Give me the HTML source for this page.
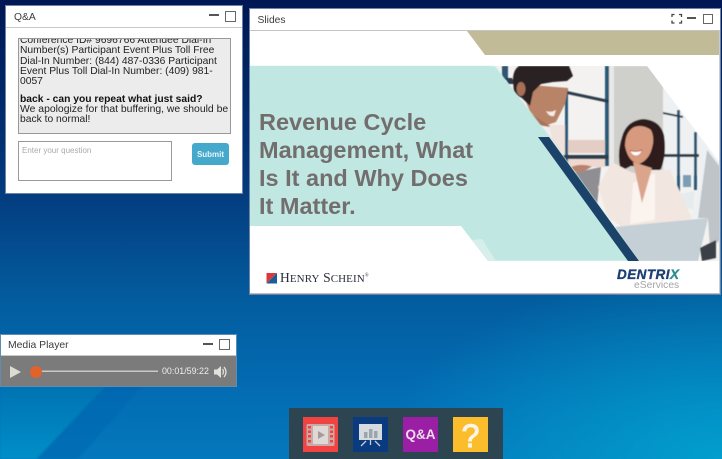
<!DOCTYPE html>
<html>
<head>
<meta charset="utf-8">
<style>
html,body{margin:0;padding:0;width:722px;height:459px;overflow:hidden;font-family:"Liberation Sans",sans-serif}
body{position:relative;background:radial-gradient(ellipse 340px 190px at 100% 100%,rgba(2,165,208,.85) 0%,rgba(2,165,208,0) 100%),linear-gradient(180deg,#001754 0%,#00205f 12%,#03397c 40%,#035c9e 65%,#036cb3 85%,#0478bc 100%)}
.abs{position:absolute}
.win{position:absolute;background:#fff;box-sizing:border-box;filter:blur(.35px)}
.t{position:absolute;white-space:nowrap}
.min{position:absolute;height:2px;width:10px;background:#555}
.max{position:absolute;width:9px;height:9px;border:1px solid #666;background:#fff}
</style>
</head>
<body>
<svg class="abs" style="left:0;top:0" width="722" height="459">
<defs>
<linearGradient id="lg" x1="0" y1="0" x2="0" y2="1"><stop offset="0" stop-color="#0272b2"/><stop offset="1" stop-color="#038fc8"/></linearGradient>
<linearGradient id="lb" x1="0" y1="0" x2="0" y2="1"><stop offset="0" stop-color="#0468b0"/><stop offset="1" stop-color="#056fb6"/></linearGradient>
<filter id="b3"><feGaussianBlur stdDeviation="1"/></filter>
</defs>
<polygon points="0,385 107,385 37,459 0,459" fill="url(#lg)" filter="url(#b3)"/>
<polygon points="107,385 143,385 78,459 37,459" fill="url(#lb)" filter="url(#b3)"/>
</svg>

<!-- Q&A -->
<div class="win" style="left:6px;top:6px;width:236px;height:187px;box-shadow:0 0 0 1px #6d84a8">
  <div class="abs" style="left:0;top:21px;width:236px;height:1px;background:#c8c8c8"></div>
  <div class="t" style="left:8px;top:5px;font-size:10.300px;line-height:14px;color:#3c3c3c">Q&amp;A</div>
  <div class="min" style="left:203px;top:8px"></div>
  <div class="max" style="left:219px;top:5px"></div>
  <div class="abs" style="left:12px;top:32px;width:213px;height:96px;box-sizing:border-box;background:#ececec;border:1px solid #999;overflow:hidden;font-size:10.300px;line-height:10.300px;color:#222">
    <div class="t" style="left:1px;top:-3px">Conference ID# 9696766 Attendee Dial-In</div>
    <div class="t" style="left:1px;top:7.300px">Number(s) Participant Event Plus Toll Free</div>
    <div class="t" style="left:1px;top:17.600px">Dial-In Number: (844) 487-0336 Participant</div>
    <div class="t" style="left:1px;top:27.900px">Event Plus Toll Dial-In Number: (409) 981-</div>
    <div class="t" style="left:1px;top:38.200px">0057</div>
    <div class="t" style="left:1px;top:55.800px;font-weight:bold;color:#111">back - can you repeat what just said?</div>
    <div class="t" style="left:1px;top:66.100px;font-size:10.400px">We apologize for that buffering, we should be</div>
    <div class="t" style="left:1px;top:76.400px">back to normal!</div>
  </div>
  <div class="abs" style="left:12px;top:135px;width:154px;height:40px;box-sizing:border-box;border:1px solid #999;background:#fff">
    <div class="t" style="left:3px;top:4px;font-size:8px;line-height:10px;color:#aaa">Enter your question</div>
  </div>
  <div class="abs" style="left:186px;top:137px;width:37px;height:22px;background:#45a9cb;border-radius:3px;color:#e9f4f8;font-size:8px;font-weight:bold;line-height:23px;text-align:center">Submit</div>
</div>

<!-- Slides -->
<div class="win" style="left:250px;top:9px;width:470px;height:285px;box-shadow:0 0 0 1px #6d84a8">
  <div class="t" style="left:7.500px;top:5px;font-size:10.300px;line-height:14px;color:#3c3c3c">Slides</div>
  <svg class="abs" style="left:0;top:0" width="470" height="285" viewBox="250 9 470 285">
    <defs>
      <filter id="b1"><feGaussianBlur stdDeviation=".6"/></filter>
      <clipPath id="ph"><polygon points="495,66 647,66 720,163 720,261 628,261"/></clipPath>
    </defs>
    <!-- fullscreen icon -->
    <g fill="none" stroke="#444" stroke-width="1.300">
      <path d="M672 17v-2.500h2.500M679 14.500h2.500V17M672 20.500V23h2.500M679 23h2.500v-2.500"/>
    </g>
    <rect x="687" y="17" width="9" height="2" fill="#555"/>
    <rect x="703.500" y="14.500" width="9" height="9" fill="#fff" stroke="#666"/>
    <rect x="250" y="30" width="470" height="1" fill="#c4c4c4"/>
    <polygon points="467,31 720,31 720,55 485,55" fill="#c2bb98"/>
    <!-- photo -->
    <g clip-path="url(#ph)">
      <rect x="495" y="66" width="225" height="195" fill="#f3f2f0"/>
      <g filter="url(#b1)">
        <rect x="609" y="66" width="5" height="110" fill="#e8e8e6"/>
        <rect x="614" y="66" width="49" height="110" fill="#cfcfcc"/>
        <rect x="663" y="90" width="57" height="85" fill="#eef0f2"/>
        <rect x="545" y="125" width="20" height="40" fill="#f0e2dc"/>
        <rect x="568" y="140" width="37" height="13" fill="#e4cdc5"/>
        <rect x="568" y="159" width="37" height="8" fill="#eed8d0"/>
        <rect x="502" y="66" width="6" height="14" fill="#2f5573"/>
        <polygon points="505,78 512,78 515,84 508,84" fill="#2a3a4c"/>
        <rect x="565" y="88" width="3" height="78" fill="#2c5a78"/>
        <rect x="605" y="66" width="4" height="100" fill="#2c5a78"/>
        <polygon points="567,91 609,100 609,103 567,94" fill="#2a3a4c"/>
        <rect x="563" y="155" width="46" height="4" fill="#2d3c4c"/>
        <rect x="677" y="110" width="3" height="85" fill="#2c5a78"/>
        <rect x="694" y="132" width="3" height="58" fill="#2c5a78"/>
        <polygon points="663,112 683,116 683,118 663,114" fill="#2a3a4c"/>
        <rect x="663" y="154" width="36" height="3" fill="#2d3c4c"/>
        <polygon points="675,195 695,191 693,210 676,203" fill="#e6ebed"/>
        <rect x="683" y="175" width="8" height="12" fill="#7d9cb5"/>
        <!-- man -->
        <polygon points="519,84 568,88 565,104 556,122 544,126 530,112" fill="#b98368"/>
        <path d="M513 80q0-10 6-14h50l4 10-6 5-14 1-12 2-8 8-3 14-8-8-8-4z" fill="#2c2322"/>
        <ellipse cx="521" cy="89" rx="4.500" ry="7" fill="#a56f57"/>
        <path d="M546 111q5 2 10-1l-2 6q-5 1-8-5z" fill="#f6ece6"/>
        <polygon points="528,112 550,126 544,132 534,128" fill="#a87259"/>
        <polygon points="538,125 550,127 552,140 542,136" fill="#f0eeee"/>
        <!-- chair & hand -->
        <polygon points="573,173 601,167 597,205 592,202" fill="#8f8e92"/>
        <path d="M571 167q10-4 21-.5l-5 3-6 3-6-.5z" fill="#b9826c"/>
        <!-- monitor -->
        <polygon points="707,142 692,218 709,218" fill="#eef1f4"/>
        <polygon points="707,150 720,167 720,240 710,250 708,218 698,218" fill="#bfc4c9"/>
        <!-- woman -->
        <path d="M620 167q-3-15 2-30q4-16 21-18q17 1 21 16q3 19-3 34l-6 4-8-6-16-1-6 3z" fill="#2e1f1b"/>
        <path d="M625 146q0-14 9-19q9-3 17 3q4 8 1 18q-3 12-13 16q-11-2-14-18z" fill="#d79a7e"/>
        <path d="M630 150q6 2 12-.5q-2 6-6 6t-6-5.500z" fill="#fff"/>
        <path d="M630 150q6 2 12-.5l.5 1q-6 2.500-13 .5z" fill="#c04d50"/>
        <polygon points="598,187 612,162 633,173 652,170 670,170 691,216 691,219 662,223 622,227 608,217" fill="#f1e6e0"/>
        <polygon points="633,183 655,173 655,220 630,224" fill="#fbf3ee"/>
        <polygon points="633,162 652,168 642,203" fill="#dba58c"/>
        <polygon points="615,227 708,218 698,261 638,261" fill="#c5cfd6"/>
        <polygon points="700,248 716,240 716,258 702,261" fill="#3a3f47"/>
      </g>
    </g>
    <!-- teal -->
    <polygon points="250,66 495,66 550,137 639,261 250,261" fill="#c0e7e1" filter="url(#b1)"/>
    <rect x="250" y="66" width="240" height="195" fill="#c0e7e1"/>
    <!-- navy band -->
    <polygon points="538,137 549,137 639,261 628,261" fill="#1b4268"/>
    <!-- white bottom -->
    <rect x="250" y="261" width="470" height="33" fill="#fff"/>
    <polygon points="250,226 461,226 488,261 250,261" fill="#fff"/>
    <polygon points="472,240 482,239 496,261 488,261" fill="#d6efeb"/>
    <!-- Henry Schein flag -->
    <polygon points="266.500,273 277,273 266.500,283.500" fill="#d93a3c"/>
    <polygon points="277,273 277,283.500 266.500,283.500" fill="#1b5e97"/>
    <rect x="719" y="31" width="1" height="263" fill="#c8cdd3"/>
    <rect x="250" y="293" width="470" height="1" fill="#bbb"/>
  </svg>
  <div class="t" style="left:9px;top:99px;font-size:23.500px;line-height:28px;font-weight:bold;color:#736e6e">Revenue Cycle<br>Management, What<br>Is It and Why Does<br>It Matter.</div>
  <div class="t" style="left:30px;top:262px;font-family:'Liberation Serif',serif;font-size:13.500px;line-height:14px;color:#2a2d3a;letter-spacing:.1px">H<span style="font-size:11px">ENRY</span> S<span style="font-size:11px">CHEIN</span><sup style="font-size:5px;line-height:0">®</sup></div>
  <div class="t" style="left:367px;top:258.500px;font-size:13.500px;line-height:14px;font-weight:bold;font-style:italic;color:#1c3f73;letter-spacing:.45px;-webkit-text-stroke:.35px #1c3f73">DENTRI<span style="color:#2f8f8f;-webkit-text-stroke:.35px #2f8f8f">X</span></div>
  <div class="t" style="left:384px;top:271px;font-size:10.300px;line-height:12px;color:#a5a5a5">eServices</div>
</div>

<!-- Media player -->
<div class="win" style="left:1px;top:335px;width:235px;height:51px;background:#7b7b7b;box-shadow:0 0 0 1px #5f8cb0">
  <div class="abs" style="left:0;top:0;width:235px;height:20px;background:#fff;border-bottom:1px solid #c8c8c8"></div>
  <div class="t" style="left:7px;top:4px;font-size:10.400px;line-height:14px;color:#3c3c3c">Media Player</div>
  <div class="min" style="left:202px;top:7.500px"></div>
  <div class="max" style="left:218px;top:4px"></div>
  <svg class="abs" style="left:0;top:21px" width="235" height="30" viewBox="1 356 235 30">
    <polygon points="10,366 21,372 10,378" fill="#dcdcd2"/>
    <rect x="40" y="370.500" width="118" height="1.500" fill="#c9c9c4"/>
    <circle cx="36" cy="372" r="6" fill="#e2622b"/>
    <path d="M214 369.500h3l4-3.500v12l-4-3.500h-3z" fill="#e2e2dc"/>
    <path d="M222.500 369q2 2.500 0 5.500M224 367q4 5 0 10" fill="none" stroke="#e2e2dc" stroke-width="1.300"/>
  </svg>
  <div class="t" style="left:161px;top:30px;font-size:8.900px;line-height:12px;color:#eee">00:01/59:22</div>
</div>

<!-- Dock -->
<div class="abs" style="left:289px;top:408px;width:214px;height:51px;background:#2d4451"></div>
<svg class="abs" style="left:289px;top:408px;filter:blur(.3px)" width="214" height="51" viewBox="289 408 214 51">
  <rect x="303" y="417" width="35" height="35" fill="#f24343"/>
  <rect x="306.500" y="424" width="28" height="22" rx="1.500" fill="#c9aaa6"/>
  <rect x="313" y="426" width="15" height="18" fill="#ded8d6"/>
  <polygon points="318,431 325,435 318,439" fill="#a59c9a"/>
  <g fill="#f24343">
    <rect x="308" y="426" width="3" height="2.500"/><rect x="308" y="430.500" width="3" height="2.500"/><rect x="308" y="435" width="3" height="2.500"/><rect x="308" y="440" width="3" height="2.500"/>
    <rect x="330" y="426" width="3" height="2.500"/><rect x="330" y="430.500" width="3" height="2.500"/><rect x="330" y="435" width="3" height="2.500"/><rect x="330" y="440" width="3" height="2.500"/>
  </g>
  <rect x="353" y="417" width="35" height="35" fill="#0a3b80"/>
  <rect x="359" y="424" width="23" height="16" fill="#d8dbdd"/>
  <rect x="364" y="432" width="3.500" height="6" fill="#9aa5b0"/>
  <rect x="369" y="429" width="3.500" height="9" fill="#9aa5b0"/>
  <rect x="374" y="431" width="3.500" height="7" fill="#9aa5b0"/>
  <path d="M370.500 440v5M366 441l-5 5M375 441l5 5" stroke="#c8ced4" stroke-width="1.300" fill="none"/>
  <rect x="403" y="417" width="35" height="35" fill="#9b1fa5"/>
  <text x="420.500" y="439" font-family="Liberation Sans,sans-serif" font-size="13.500" font-weight="bold" fill="#ecdcec" text-anchor="middle">Q&amp;A</text>
  <rect x="453" y="417" width="35" height="35" fill="#fbbd2c"/>
  <text x="470.500" y="447" font-family="Liberation Sans,sans-serif" font-size="32" fill="#fdf6e8" stroke="#fdf6e8" stroke-width="1" text-anchor="middle">?</text>
</svg>
</body>
</html>
